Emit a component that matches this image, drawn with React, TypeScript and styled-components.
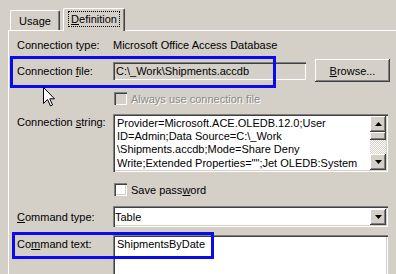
import React from "react";
import styled, { createGlobalStyle, css } from "styled-components";

const Global = createGlobalStyle`
  html, body { margin: 0; padding: 0; background: #d4d0c8; }
  body { font-family: "Liberation Sans", Arial, sans-serif; font-size: 11px; color: #000; }
`;

const sunken = css`
  box-sizing: border-box;
  box-shadow: inset 1px 1px #808080, inset 2px 2px #404040, inset -1px -1px #fff,
    inset -2px -2px #d4d0c8;
`;

const raised = css`
  box-sizing: border-box;
  box-shadow: inset -1px -1px #404040, inset 1px 1px #fff, inset -2px -2px #808080,
    inset 2px 2px #d4d0c8;
`;

const Window = styled.div`
  position: relative;
  width: 396px;
  height: 274px;
  overflow: hidden;
  background: #d4d0c8;
`;

const TabStrip = styled.div`
  display: flex;
  align-items: flex-end;
  height: 30px;
  padding-left: 10px;
`;

const Tab = styled.div<{ $active?: boolean; $w: number }>`
  position: relative;
  box-sizing: border-box;
  width: ${(p) => p.$w}px;
  height: ${(p) => (p.$active ? 23 : 20)}px;
  margin-left: ${(p) => (p.$active ? 3 : 0)}px;
  margin-bottom: ${(p) => (p.$active ? -1 : 0)}px;
  z-index: ${(p) => (p.$active ? 2 : 1)};
  display: flex;
  align-items: center;
  justify-content: center;
  padding-bottom: ${(p) => (p.$active ? 2 : 0)}px;
  background: #d4d0c8;
  border-top: 1px solid #fff;
  border-left: 1px solid #fff;
  border-right: 1px solid #404040;
  box-shadow: inset -1px 0 #808080;
  border-radius: 2px 2px 0 0;
`;

const Focus = styled.span`
  padding: 1px 2px;
  outline: 1px dotted #000;
  outline-offset: 0;
`;

const Panel = styled.div`
  box-sizing: border-box;
  margin-left: 8px;
  height: 244px;
  border-top: 1px solid #fff;
  border-left: 1px solid #fff;
  padding: 6px 0 0 8px;
  display: flex;
  flex-direction: column;
`;

const Row = styled.div<{ $h: number; $top?: number; $alignTop?: boolean }>`
  display: flex;
  align-items: ${(p) => (p.$alignTop ? "flex-start" : "center")};
  height: ${(p) => p.$h}px;
  margin-top: ${(p) => p.$top ?? 0}px;
  flex-shrink: 0;
`;

const Label = styled.div<{ $pad?: number }>`
  width: 96px;
  flex-shrink: 0;
  padding-top: ${(p) => p.$pad ?? 0}px;
  white-space: nowrap;
`;

const Value = styled.div`
  white-space: nowrap;
`;

const Field = styled.div<{ $w: number; $h: number; $bg?: string }>`
  ${sunken};
  width: ${(p) => p.$w}px;
  height: ${(p) => p.$h}px;
  background: ${(p) => p.$bg ?? "#fff"};
  display: flex;
  align-items: center;
  padding: 0 3px;
  white-space: nowrap;
  overflow: hidden;
`;

const Button = styled.div`
  ${raised};
  width: 75px;
  height: 23px;
  margin-left: 9px;
  background: #d4d0c8;
  display: flex;
  align-items: center;
  justify-content: center;
`;

const Check = styled.div<{ $disabled?: boolean }>`
  ${sunken};
  width: 13px;
  height: 13px;
  margin-left: 1px;
  background: ${(p) => (p.$disabled ? "#d4d0c8" : "#fff")};
`;

const CheckText = styled.span<{ $disabled?: boolean }>`
  margin-left: 4px;
  color: ${(p) => (p.$disabled ? "#8a8a8a" : "#000")};
  text-shadow: ${(p) => (p.$disabled ? "1px 1px #fff" : "none")};
  white-space: nowrap;
`;

const TextArea = styled.div<{ $h: number }>`
  ${sunken};
  width: 275px;
  height: ${(p) => p.$h}px;
  background: #fff;
  display: flex;
  padding: 2px;
`;

const AreaText = styled.div`
  flex: 1;
  padding: 1px 0 0 2px;
  line-height: 13.2px;
  white-space: nowrap;
`;

const ScrollBar = styled.div`
  width: 16px;
  display: flex;
  flex-direction: column;
  background-color: #fff;
  background-image: repeating-conic-gradient(#d4d0c8 0 25%, #fff 0 50%);
  background-size: 2px 2px;
`;

const ScrollBtn = styled.div`
  ${raised};
  width: 16px;
  height: 16px;
  background: #d4d0c8;
  display: flex;
  align-items: center;
  justify-content: center;
  flex-shrink: 0;
`;

const Thumb = styled.div`
  ${raised};
  height: 8px;
  background: #d4d0c8;
`;

const Track = styled.div`
  flex: 1;
`;

const Select = styled(Field)`
  justify-content: space-between;
  padding: 2px;
`;

const Highlight = styled.div<{ $x: number; $y: number; $w: number; $h: number }>`
  position: absolute;
  left: ${(p) => p.$x}px;
  top: ${(p) => p.$y}px;
  width: ${(p) => p.$w}px;
  height: ${(p) => p.$h}px;
  box-sizing: border-box;
  border: 3px solid #0a0aee;
  pointer-events: none;
`;

const Cursor = styled.svg`
  position: absolute;
  left: 43px;
  top: 87px;
`;

const U = styled.span`
  text-decoration: underline;
`;

const Arrow = ({ up }: { up?: boolean }) => (
  <svg width="7" height="4" viewBox="0 0 7 4">
    <path d={up ? "M3.5 0 L7 4 L0 4 Z" : "M0 0 L7 0 L3.5 4 Z"} fill="#000" />
  </svg>
);

export default function App() {
  return (
    <Window>
      <Global />
      <TabStrip>
        <Tab $w={50}>
          Usa<U>g</U>e
        </Tab>
        <Tab $w={62} $active>
          <Focus>
            <U>D</U>efinition
          </Focus>
        </Tab>
      </TabStrip>
      <Panel>
        <Row $h={16}>
          <Label>Connection type:</Label>
          <Value>Microsoft Office Access Database</Value>
        </Row>
        <Row $h={23} $top={6}>
          <Label>
            Connection <U>f</U>ile:
          </Label>
          <Field $w={193} $h={18} $bg="#d4d0c8">
            C:\_Work\Shipments.accdb
          </Field>
          <Button>
            <span>
              <U>B</U>rowse...
            </span>
          </Button>
        </Row>
        <Row $h={13} $top={10}>
          <Label />
          <Check $disabled />
          <CheckText $disabled>Always use connection file</CheckText>
        </Row>
        <Row $h={58} $top={9} $alignTop>
          <Label $pad={2}>
            Connection <U>s</U>tring:
          </Label>
          <TextArea $h={58}>
            <AreaText>
              Provider=Microsoft.ACE.OLEDB.12.0;User
              <br />
              ID=Admin;Data Source=C:\_Work
              <br />
              \Shipments.accdb;Mode=Share Deny
              <br />
              Write;Extended Properties="";Jet OLEDB:System
            </AreaText>
            <ScrollBar>
              <ScrollBtn>
                <Arrow up />
              </ScrollBtn>
              <Thumb />
              <Track />
              <ScrollBtn>
                <Arrow />
              </ScrollBtn>
            </ScrollBar>
          </TextArea>
        </Row>
        <Row $h={13} $top={11}>
          <Label />
          <Check />
          <CheckText>
            Save pass<U>w</U>ord
          </CheckText>
        </Row>
        <Row $h={21} $top={10}>
          <Label>
            <U>C</U>ommand type:
          </Label>
          <Select $w={275} $h={21}>
            <span>Table</span>
            <ScrollBtn>
              <Arrow />
            </ScrollBtn>
          </Select>
        </Row>
        <Row $h={60} $top={8} $alignTop>
          <Label $pad={3}>
            Co<U>m</U>mand text:
          </Label>
          <TextArea $h={60}>
            <AreaText>ShipmentsByDate</AreaText>
          </TextArea>
        </Row>
      </Panel>
      <Highlight $x={10} $y={56} $w={266} $h={32} />
      <Highlight $x={12} $y={232} $w={202} $h={27} />
      <Cursor width="13" height="20" viewBox="0 0 13 20">
        <path
          d="M0.5 0.5 L0.5 16.5 L4.5 12.5 L7.5 19 L9.5 18 L6.8 11.8 L11.5 11.8 Z"
          fill="#fff"
          stroke="#000"
          strokeWidth="1"
        />
      </Cursor>
    </Window>
  );
}
